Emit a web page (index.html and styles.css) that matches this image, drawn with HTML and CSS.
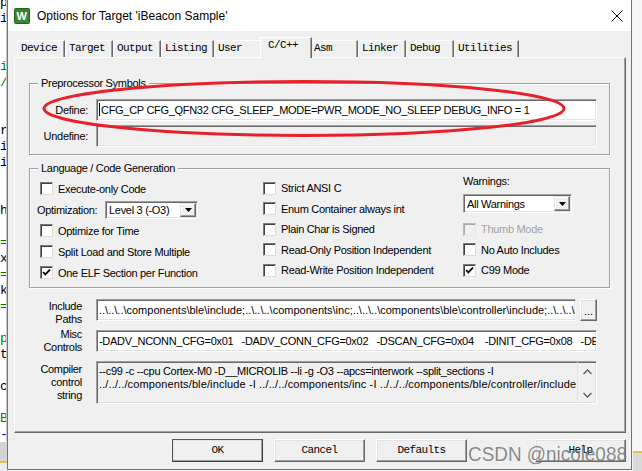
FILE: index.html
```html
<!DOCTYPE html>
<html>
<head lang="en">
    <meta charset="UTF-8">
    <title>Options for Target 'iBeacon Sample'</title>
    <link rel="stylesheet" href="styles.css">
</head>
<body>
<div id="desk">
    <!--后面的代码编辑器-->
    <div class="editor">
        <div class="ln">p</div>
        <div class="ln">i</div>
        <div class="ln"></div>
        <div class="ln"></div>
        <div class="ln g">i</div>
        <div class="ln g">/</div>
        <div class="ln"></div>
        <div class="ln"></div>
        <div class="ln">r</div>
        <div class="ln">i</div>
        <div class="ln">i</div>
        <div class="ln"></div>
        <div class="ln"></div>
        <div class="ln">h</div>
        <div class="ln"></div>
        <div class="ln g">=</div>
        <div class="ln">x</div>
        <div class="ln g">=</div>
        <div class="ln">k</div>
        <div class="ln g">=</div>
        <div class="ln"></div>
        <div class="ln g">p</div>
        <div class="ln">t</div>
        <div class="ln"></div>
        <div class="ln">c</div>
        <div class="ln"></div>
        <div class="ln g">B</div>
        <div class="ln b">-</div>
    </div>
    <div class="bar_l"></div>
    <div class="bar_r"></div>

    <!--对话框-->
    <div class="dialog">
        <div class="cap">
            <svg class="logo" width="16" height="16" viewBox="0 0 16 16">
                <rect x="0.5" y="0.5" width="15" height="15" rx="1" fill="#3a8435" stroke="#25601f"/>
                <text x="7.5" y="11.5" font-family="Liberation Sans" font-size="11" font-weight="bold" fill="#fff" text-anchor="middle">W</text>
            </svg>
            <span class="cap_t">Options for Target 'iBeacon Sample'</span>
            <svg class="cap_x" width="12" height="12" viewBox="0 0 12 12">
                <path d="M0.5 0.5 L11.5 11.5 M11.5 0.5 L0.5 11.5" stroke="#000" stroke-width="1"/>
            </svg>
        </div>

        <div class="dlg_body">
            <div class="tabs">
                <div class="tab">Device</div>
                <div class="tab">Target</div>
                <div class="tab">Output</div>
                <div class="tab">Listing</div>
                <div class="tab">User</div>
                <div class="tab sel">C/C++</div>
                <div class="tab">Asm</div>
                <div class="tab">Linker</div>
                <div class="tab">Debug</div>
                <div class="tab">Utilities</div>
            </div>

            <div class="panel">
                <!--预处理符号-->
                <fieldset class="grp">
                    <legend>Preprocessor Symbols</legend>
                    <div class="pre">
                        <div class="lbl">Define:</div>
                        <div class="edit"><span class="caret"></span>CFG_CP CFG_QFN32 CFG_SLEEP_MODE=PWR_MODE_NO_SLEEP DEBUG_INFO = 1</div>
                        <div class="lbl">Undefine:</div>
                        <div class="edit off"></div>
                    </div>
                </fieldset>

                <!--语言 / 代码生成-->
                <fieldset class="grp grp2">
                    <legend>Language / Code Generation</legend>
                    <div class="lang">
                        <div class="col col1">
                            <div class="row ck"><span class="chk"></span>Execute-only Code</div>
                            <div class="row">
                                <span class="opt_l">Optimization:</span>
                                <div class="combo opt_c">
                                    <span class="val">Level 3 (-O3)</span>
                                    <span class="drop"><svg width="7" height="4" viewBox="0 0 7 4"><path d="M0 0 H7 L3.5 4 Z" fill="#000"/></svg></span>
                                </div>
                            </div>
                            <div class="row ck"><span class="chk"></span>Optimize for Time</div>
                            <div class="row ck"><span class="chk"></span>Split Load and Store Multiple</div>
                            <div class="row ck"><span class="chk on"><svg width="11" height="11" viewBox="0 0 11 11"><path d="M2 5 L4.3 7.4 L9 2.6" fill="none" stroke="#000" stroke-width="1.8"/></svg></span>One ELF Section per Function</div>
                        </div>
                        <div class="col col2">
                            <div class="row"><span class="chk"></span>Strict ANSI C</div>
                            <div class="row"><span class="chk"></span>Enum Container always int</div>
                            <div class="row"><span class="chk"></span>Plain Char is Signed</div>
                            <div class="row"><span class="chk"></span>Read-Only Position Independent</div>
                            <div class="row"><span class="chk"></span>Read-Write Position Independent</div>
                        </div>
                        <div class="col col3">
                            <div class="wblock">
                                <div class="warn_l">Warnings:</div>
                                <div class="combo warn_c">
                                    <span class="val">All Warnings</span>
                                    <span class="drop"><svg width="7" height="4" viewBox="0 0 7 4"><path d="M0 0 H7 L3.5 4 Z" fill="#000"/></svg></span>
                                </div>
                            </div>
                            <div class="row dis"><span class="chk"></span>Thumb Mode</div>
                            <div class="row"><span class="chk"></span>No Auto Includes</div>
                            <div class="row"><span class="chk on"><svg width="11" height="11" viewBox="0 0 11 11"><path d="M2 5 L4.3 7.4 L9 2.6" fill="none" stroke="#000" stroke-width="1.8"/></svg></span>C99 Mode</div>
                        </div>
                    </div>
                </fieldset>

                <!--路径和控制-->
                <div class="opts">
                    <div class="plabel inc">Include<br>Paths</div>
                    <div class="inc_row">
                        <div class="edit inc_e">..\..\..\components\ble\include;..\..\..\components\inc;..\..\..\components\ble\controller\include;..\..\..\</div>
                        <div class="btn dots">...</div>
                    </div>
                    <div class="plabel">Misc<br>Controls</div>
                    <div class="edit">-DADV_NCONN_CFG=0x01   -DADV_CONN_CFG=0x02   -DSCAN_CFG=0x04    -DINIT_CFG=0x08   -DEBUG</div>
                    <div class="plabel">Compiler<br>control<br>string</div>
                    <div class="cbox">
                        <div class="ctext">--c99 -c --cpu Cortex-M0 -D__MICROLIB --li -g -O3 --apcs=interwork --split_sections -I<br><span class="paths">../../../components/ble/include -I ../../../components/inc -I ../../../components/ble/controller/include</span></div>
                        <div class="sbar">
                            <svg width="9" height="6" viewBox="0 0 9 6"><path d="M0.5 5 L4.5 1 L8.5 5" fill="none" stroke="#606060" stroke-width="1.4"/></svg>
                            <svg width="9" height="6" viewBox="0 0 9 6"><path d="M0.5 1 L4.5 5 L8.5 1" fill="none" stroke="#606060" stroke-width="1.4"/></svg>
                        </div>
                    </div>
                </div>
            </div>

            <div class="btns">
                <div class="btn b_ok">OK</div>
                <div class="btn">Cancel</div>
                <div class="btn">Defaults</div>
                <div class="btn b_help">Help</div>
            </div>
        </div>

        <!--红圈-->
        <svg class="mark" width="530" height="62" viewBox="0 0 530 62">
            <ellipse cx="264" cy="30.5" rx="260" ry="27" fill="none" stroke="#e8202a" stroke-width="3"/>
        </svg>
        <div class="csdn">CSDN @nicole088</div>
    </div>
</div>
</body>
</html>
```

FILE: styles.css
```css
body {
    margin: 0;
    background: #fff;
    font-family: "Liberation Sans", Arial, sans-serif;
    font-size: 11px;
    letter-spacing: -0.3px;
    color: #000;
}
#desk {
    position: relative;
    width: 642px;
    height: 471px;
    overflow: hidden;
    background: #f4f4f4;
}

/* 后面的编辑器 */
.editor {
    position: absolute;
    left: 0;
    top: -5px;
    width: 6px;
    height: 447px;
    background: #fff;
    border-right: 1px solid #c8c8c8;
    overflow: hidden;
    font-family: "Liberation Mono", monospace;
    font-size: 13px;
    letter-spacing: 0;
}
.editor .ln {
    height: 16px;
    line-height: 16px;
}
.editor .g {
    color: #008000;
}
.editor .b {
    color: #0000ff;
}
.bar_l {
    position: absolute;
    left: 0;
    top: 442px;
    width: 7px;
    height: 29px;
    background: linear-gradient(#d4d4d4 0 19px, #e8c04a 19px 21px, #ececec 21px);
}
.bar_r {
    position: absolute;
    right: 0;
    top: 0;
    width: 9px;
    height: 471px;
    background: linear-gradient(#f7f7f7 0 451px, #e8c04a 451px 453px, #dadada 453px);
}

/* 对话框 */
.dialog {
    position: absolute;
    left: 7px;
    top: -1px;
    width: 623px;
    height: 469px;
    border: 1px solid #2c86d6;
    background: #f0f0f0;
}
.cap {
    height: 31px;
    background: #fff;
    display: flex;
    align-items: center;
}
.logo {
    margin-left: 6px;
}
.cap_t {
    flex: 1;
    margin-left: 7px;
    font-size: 12px;
    letter-spacing: 0;
}
.cap_x {
    margin-right: 8px;
}
.dlg_body {
    padding: 6px 5px 7px 6px;
}

/* 选项卡 */
.tabs {
    display: flex;
    align-items: flex-end;
    height: 20px;
    padding-left: 3px;
    font-family: "Liberation Mono", monospace;
    font-size: 11px;
    letter-spacing: -0.6px;
}
.tab {
    min-width: 48px;
    height: 17px;
    box-sizing: border-box;
    padding: 0 6px 0 3px;
    border: 1px solid;
    border-bottom: none;
    border-color: #fff #696969 #fff #fff;
    box-shadow: inset -1px 0 0 #a0a0a0;
    line-height: 15px;
    white-space: nowrap;
}
.tab.sel {
    position: relative;
    z-index: 1;
    min-width: 52px;
    height: 21px;
    margin: 0 -2px -1px;
    padding-left: 7px;
    background: #f0f0f0;
    line-height: 15px;
}
.panel {
    width: 612px;
    height: 376px;
    box-sizing: border-box;
    border: 1px solid;
    border-color: #fff #696969 #696969 #fff;
    box-shadow: inset -1px -1px 0 #a0a0a0;
    padding: 19px 0 0 14px;
}

/* 分组框 */
.grp {
    width: 581px;
    min-width: 0;
    box-sizing: border-box;
    margin: 0;
    padding: 0;
    border: 1px solid #a0a0a0;
    box-shadow: inset 1px 1px 0 #fff, 1px 1px 0 #fff;
}
.grp legend {
    margin-left: 8px;
    padding: 0 3px;
    height: 13px;
    line-height: 13px;
    background: #f0f0f0;
}
.grp2 {
    margin-top: 7px;
}
.pre {
    display: grid;
    grid-template-columns: 58px 1fr;
    column-gap: 8px;
    row-gap: 4px;
    padding: 9px 12px 7px 0;
}
.lbl {
    align-self: center;
    text-align: right;
}
.edit {
    height: 22px;
    box-sizing: border-box;
    border: 1px solid;
    border-color: #a0a0a0 #fff #fff #a0a0a0;
    box-shadow: inset 1px 1px 0 #696969, inset -1px -1px 0 #e3e3e3;
    background: #fff;
    padding: 0 1px 0 2px;
    line-height: 20px;
    white-space: pre;
    overflow: hidden;
}
.edit.off {
    background: #f0f0f0;
}
.caret {
    display: inline-block;
    width: 1px;
    height: 13px;
    margin-right: 1px;
    background: #000;
    vertical-align: -2px;
}

.lang {
    display: flex;
    padding: 3px 0 4px 7px;
}
.col1 {
    width: 226px;
}
.col2 {
    width: 200px;
}
.row {
    display: flex;
    align-items: center;
    height: 21px;
    white-space: nowrap;
}
.col2 .row, .col3 .row {
    height: 20.5px;
}
.row.ck {
    padding-left: 3px;
}
.chk {
    width: 13px;
    height: 13px;
    box-sizing: border-box;
    margin-right: 5px;
    border: 1px solid;
    border-color: #7a7a7a #dcdcdc #dcdcdc #7a7a7a;
    box-shadow: inset 1px 1px 0 #404040;
    background: #fff;
    display: flex;
    align-items: center;
    justify-content: center;
}
.dis {
    color: #a3a3a3;
}
.dis .chk {
    background: #f0f0f0;
    border-color: #b8b8b8 #e8e8e8 #e8e8e8 #b8b8b8;
    box-shadow: inset 1px 1px 0 #a8a8a8;
}
.opt_l {
    width: 68px;
}
.combo {
    display: flex;
    align-items: stretch;
    box-sizing: border-box;
    border: 1px solid;
    border-color: #a0a0a0 #fff #fff #a0a0a0;
    box-shadow: inset 1px 1px 0 #696969, inset -1px -1px 0 #e3e3e3;
    background: #fff;
    padding: 1px;
}
.combo .val {
    flex: 1;
    padding-left: 2px;
    display: flex;
    align-items: center;
    white-space: nowrap;
}
.drop {
    width: 16px;
    box-sizing: border-box;
    border: 1px solid;
    border-color: #e3e3e3 #696969 #696969 #e3e3e3;
    box-shadow: inset -1px -1px 0 #a0a0a0, inset 1px 1px 0 #fff;
    background: #f0f0f0;
    display: flex;
    align-items: center;
    justify-content: center;
}
.opt_c {
    width: 93px;
    height: 18px;
}
.wblock {
    height: 41px;
    display: flex;
    flex-direction: column;
}
.warn_l {
    margin-top: -3px;
    line-height: 13px;
}
.warn_c {
    width: 109px;
    height: 19px;
    margin-top: 6px;
}

/* 路径 */
.opts {
    display: grid;
    grid-template-columns: 53px 501px;
    grid-template-rows: 22px 22px 43px;
    column-gap: 14px;
    row-gap: 9px;
    margin-top: 11px;
}
.plabel {
    align-self: center;
    text-align: right;
    line-height: 13px;
}
.plabel.inc {
    padding-top: 5px;
}
.inc_row {
    display: flex;
    gap: 4px;
}
.inc_e {
    flex: 1;
    letter-spacing: 0;
}
.btn {
    box-sizing: border-box;
    border: 1px solid;
    border-color: #fff #696969 #696969 #fff;
    box-shadow: inset -1px -1px 0 #a0a0a0, inset 1px 1px 0 #e3e3e3;
    background: #f0f0f0;
    text-align: center;
}
.dots {
    width: 17px;
    height: 22px;
    line-height: 22px;
    letter-spacing: 0;
}
.cbox {
    display: flex;
    box-sizing: border-box;
    border: 1px solid;
    border-color: #a0a0a0 #fff #fff #a0a0a0;
    box-shadow: inset 1px 1px 0 #696969, inset -1px -1px 0 #e3e3e3;
    background: #f0f0f0;
}
.ctext {
    flex: 1;
    padding: 3px 1px 0 2px;
    line-height: 13px;
    white-space: pre;
    overflow: hidden;
}
.ctext .paths {
    letter-spacing: 0.12px;
}
.sbar {
    width: 19px;
    box-sizing: border-box;
    border-left: 1px solid #e3e3e3;
    padding: 7px 0 5px;
    display: flex;
    flex-direction: column;
    justify-content: space-between;
    align-items: center;
}

/* 底部按钮 */
.btns {
    display: flex;
    height: 23px;
    margin-top: 6px;
    font-family: "Liberation Mono", monospace;
    font-size: 11px;
    letter-spacing: -0.6px;
}
.btns .btn {
    width: 91px;
    line-height: 21px;
    margin-left: 11px;
}
.btns .b_ok {
    margin-left: 158px;
    border-color: #555 #404040 #404040 #555;
}
.btns .b_help {
    margin-left: auto;
}

.mark {
    position: absolute;
    left: 32px;
    top: 78px;
}
.csdn {
    position: absolute;
    left: 460px;
    top: 443px;
    font-size: 21px;
    line-height: 21px;
    letter-spacing: 0;
    color: rgba(120, 120, 120, 0.85);
    white-space: nowrap;
    transform: scaleX(0.9);
    transform-origin: left top;
}
```
